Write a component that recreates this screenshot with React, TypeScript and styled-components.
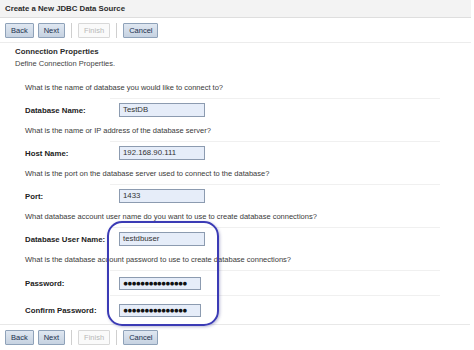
import React from 'react'
import styled, { createGlobalStyle } from 'styled-components'

const GlobalStyle = createGlobalStyle`
  html, body {
    margin: 0;
    padding: 0;
    background: #ffffff;
  }
  body {
    font-family: 'Liberation Sans', Arial, sans-serif;
    font-size: 7.5px;
    color: #333333;
  }
`

const Page = styled.div`
  position: relative;
  width: 474px;
  height: 350px;
  overflow: hidden;
  background: #ffffff;
`

const TitleBar = styled.div`
  height: 17px;
  margin-right: 3px;
  display: flex;
  align-items: center;
  padding-left: 5px;
  background: #f3f3f3;
  border-bottom: 1px solid #dedede;
  font-weight: bold;
  font-size: 7.8px;
  color: #2b2b2b;
`

const Toolbar = styled.div<{ divider?: boolean }>`
  display: flex;
  align-items: center;
  gap: 4px;
  height: 24px;
  padding-left: 5px;
  margin-right: 3px;
  border-bottom: ${x => (x.divider ? '1px solid #ececec' : 'none')};
`

const Button = styled.button<{ disabled?: boolean }>`
  height: 15px;
  padding: 0 5px;
  font-family: 'Liberation Sans', Arial, sans-serif;
  font-size: 7.5px;
  color: ${x => (x.disabled ? '#b8b8b8' : '#1b2f4d')};
  background: ${x =>
    x.disabled ? '#fafafa' : 'linear-gradient(#dfe7f1, #c6d2e1)'};
  border: 1px solid ${x => (x.disabled ? '#d8d8d8' : '#8fa2b9')};
  border-radius: 1px;
  line-height: 13px;
`

const Separator = styled.span`
  width: 1px;
  height: 15px;
  margin: 0 2px;
  background: #cfcfcf;
`

const Intro = styled.div`
  padding: 3px 0 0 15px;
  height: 32px;
`

const SectionTitle = styled.div`
  font-weight: bold;
  font-size: 7.8px;
  color: #2b2b2b;
  height: 12px;
  line-height: 12px;
`

const SectionText = styled.div`
  height: 12px;
  line-height: 12px;
  color: #444444;
`

const Form = styled.div`
  display: flex;
  flex-direction: column;
`

const Question = styled.div`
  height: 20px;
  line-height: 20px;
  padding-left: 25px;
  color: #3a3a3a;
`

const Rule = styled.div<{ wide?: boolean }>`
  height: 1px;
  margin-left: ${x => (x.wide ? '0' : '110px')};
  width: ${x => (x.wide ? '470px' : '330px')};
  background: ${x => (x.wide ? '#e8e8e8' : '#f0f0f0')};
`

const FieldRow = styled.div<{ h: number }>`
  display: grid;
  grid-template-columns: 94px auto;
  align-items: center;
  height: ${x => x.h}px;
  padding-left: 25px;
`

const Label = styled.span`
  font-weight: bold;
  color: #222222;
  font-size: 7.8px;
`

const Input = styled.div<{ w: number; h: number; secret?: boolean }>`
  box-sizing: border-box;
  width: ${x => x.w}px;
  height: ${x => x.h}px;
  padding-left: 3px;
  line-height: ${x => x.h - 2}px;
  background: #e6edf9;
  border: 1px solid #8c9bb0;
  color: ${x => (x.secret ? '#111111' : '#333333')};
  font-size: ${x => (x.secret ? '8.5px' : '7.8px')};
  letter-spacing: ${x => (x.secret ? '-0.9px' : '0')};
  overflow: hidden;
  white-space: nowrap;
`

const Highlight = styled.div`
  position: absolute;
  left: 107px;
  top: 221px;
  width: 112px;
  height: 105px;
  box-sizing: border-box;
  border: 2px solid #3b3bb5;
  border-radius: 15px;
  box-shadow: 1px 1px 3px rgba(60, 60, 140, 0.35);
  pointer-events: none;
`

const Buttons: React.FC<{ divider?: boolean }> = ({ divider }) => (
  <Toolbar divider={divider}>
    <Button>Back</Button>
    <Button>Next</Button>
    <Separator />
    <Button disabled>Finish</Button>
    <Separator />
    <Button>Cancel</Button>
  </Toolbar>
)

const dots = '●●●●●●●●●●●●●●●'

export default function App() {
  return (
    <Page>
      <GlobalStyle />
      <TitleBar>Create a New JDBC Data Source</TitleBar>
      <Buttons divider />
      <Intro>
        <SectionTitle>Connection Properties</SectionTitle>
        <SectionText>Define Connection Properties.</SectionText>
      </Intro>
      <Form>
        <Question>What is the name of database you would like to connect to?</Question>
        <Rule />
        <FieldRow h={22}>
          <Label>Database Name:</Label>
          <Input w={86} h={14}>TestDB</Input>
        </FieldRow>
        <Question>What is the name or IP address of the database server?</Question>
        <Rule />
        <FieldRow h={22}>
          <Label>Host Name:</Label>
          <Input w={86} h={14}>192.168.90.111</Input>
        </FieldRow>
        <Question>What is the port on the database server used to connect to the database?</Question>
        <Rule />
        <FieldRow h={22}>
          <Label>Port:</Label>
          <Input w={86} h={14}>1433</Input>
        </FieldRow>
        <Question>What database account user name do you want to use to create database connections?</Question>
        <Rule />
        <FieldRow h={22}>
          <Label>Database User Name:</Label>
          <Input w={86} h={14}>testdbuser</Input>
        </FieldRow>
        <Question>What is the database account password to use to create database connections?</Question>
        <Rule />
        <FieldRow h={24}>
          <Label>Password:</Label>
          <Input w={82} h={13} secret>{dots}</Input>
        </FieldRow>
        <Rule />
        <FieldRow h={28}>
          <Label>Confirm Password:</Label>
          <Input w={82} h={13} secret>{dots}</Input>
        </FieldRow>
        <Rule wide />
      </Form>
      <Buttons />
      <Highlight />
    </Page>
  )
}
